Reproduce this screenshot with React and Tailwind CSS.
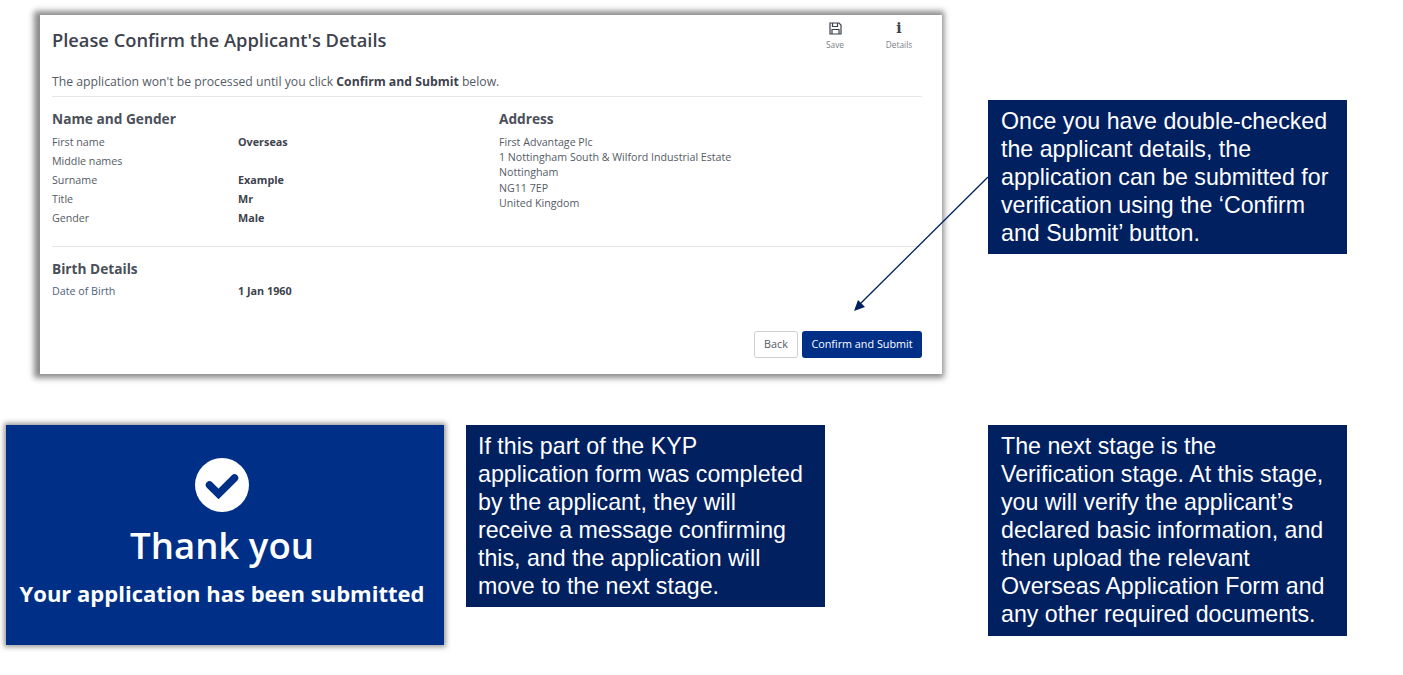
const F = "font-['Open_Sans',sans-serif]";

function Callout({ className, children }) {
  return (
    <div className={`w-[359px] bg-[#002060] text-[23.2px] leading-[28px] text-white font-['Liberation_Sans',Arial,sans-serif] ${className}`}>
      {children}
    </div>
  );
}

function Row({ label, value }) {
  return (
    <div className="flex h-[19px] items-center text-[10.7px] text-[#555b66]">
      <div className="w-[186px]">{label}</div>
      <div className="text-[10.8px] font-bold text-[#3d424d]">{value}</div>
    </div>
  );
}

export default function App() {
  return (
    <div className={`relative h-[675px] w-[1403px] overflow-hidden bg-white ${F}`}>
      <div className="flex items-start pl-[40px] pt-[15px]">
        <div className="flex h-[359px] w-[902px] flex-col bg-white pl-[12px] pr-[20px] shadow-[-2px_0_6px_4px_#8a8a8a]">
          <div className="flex h-[53px] items-start justify-between">
            <h1 className="pt-[13px] text-[18.3px] font-semibold leading-[24px] text-[#3d424d]">Please Confirm the Applicant's Details</h1>
            <div className="flex pt-[7px]">
              <div className="flex w-[64px] flex-col items-center text-[8.3px] leading-[12px] text-[#7a7f88]">
                <svg width="13" height="13" viewBox="0 0 13 13" fill="none" stroke="#3d424d" strokeWidth="1.2">
                  <path d="M1 1h9l2 2v9H1z" />
                  <path d="M3.5 1v3.5h5V1M3 12V7.5h7V12" />
                </svg>
                <span className="mt-[4px]">Save</span>
              </div>
              <div className="mr-[-9px] flex w-[64px] flex-col items-center text-[8.3px] leading-[12px] text-[#7a7f88]">
                <span className="h-[13px] font-['DejaVu_Serif',serif] text-[14px] font-bold leading-[13px] text-[#3d424d]">i</span>
                <span className="mt-[4px]">Details</span>
              </div>
            </div>
          </div>
          <p className="flex h-[29px] items-center border-b border-[#e6e6e6] pt-[1px] text-[12.22px] text-[#555b66]">
            <span>The application won't be processed until you click <b className="text-[#3d424d]">Confirm and Submit</b> below.</span>
          </p>
          <div className="flex h-[150px] border-b border-[#e6e6e6] pt-[13px]">
            <div className="w-[447px]">
              <h2 className="mb-[5px] text-[13.7px] font-bold leading-[18px] text-[#4a4f5a]">Name and Gender</h2>
              <Row label="First name" value="Overseas" />
              <Row label="Middle names" value="" />
              <Row label="Surname" value="Example" />
              <Row label="Title" value="Mr" />
              <Row label="Gender" value="Male" />
            </div>
            <div>
              <h2 className="mb-[7px] text-[13.7px] font-bold leading-[18px] text-[#4a4f5a]">Address</h2>
              <div className="text-[10.65px] leading-[15.2px] text-[#555b66]">
                <div>First Advantage Plc</div>
                <div>1 Nottingham South &amp; Wilford Industrial Estate</div>
                <div>Nottingham</div>
                <div>NG11 7EP</div>
                <div>United Kingdom</div>
              </div>
            </div>
          </div>
          <div className="pt-[13px]">
            <h2 className="mb-[4px] text-[13.7px] font-bold leading-[18px] text-[#4a4f5a]">Birth Details</h2>
            <div className="flex h-[19px] items-center text-[10.7px]">
              <div className="w-[186px] text-[#4f6280]">Date of Birth</div>
              <div className="text-[10.8px] font-bold text-[#3d424d]">1 Jan 1960</div>
            </div>
          </div>
          <div className="mt-[30px] flex justify-end gap-[4px]">
            <button className="flex h-[27px] w-[44px] items-center justify-center rounded-[3px] border border-[#cfcfcf] bg-white pb-[1px] text-[10.8px] text-[#555b66]">Back</button>
            <button className="flex h-[27px] w-[120px] items-center justify-center rounded-[3px] bg-[#002f87] pb-[1px] text-[10.8px] text-white">Confirm and Submit</button>
          </div>
        </div>
        <Callout className="ml-[46px] mt-[85px] h-[154px] pl-[13px] pt-[7px]">
          Once you have double-checked<br />the applicant details, the<br />application can be submitted for<br />verification using the ‘Confirm<br />and Submit’ button.
        </Callout>
      </div>

      <div className="mt-[51px] flex items-start pl-[6px]">
        <div className="flex h-[220px] w-[438px] flex-col items-center bg-[#002f87] pr-[6px] pt-[33px] text-white shadow-[0_0_5px_2px_#999999]">
          <svg width="54" height="54" viewBox="0 0 54 54">
            <circle cx="27" cy="27" r="27" fill="#ffffff" />
            <path d="M14.5 27l9 9 16-16" fill="none" stroke="#002f87" strokeWidth="7.5" strokeLinecap="round" strokeLinejoin="miter" />
          </svg>
          <div className="mt-[8px] text-[36.6px] font-semibold leading-[50px]">Thank you</div>
          <div className="mt-[8px] whitespace-nowrap text-[22px] font-bold leading-[30px]">Your application has been submitted</div>
        </div>
        <Callout className="ml-[22px] h-[182px] pl-[12px] pt-[7px]">
          If this part of the KYP<br />application form was completed<br />by the applicant, they will<br />receive a message confirming<br />this, and the application will<br />move to the next stage.
        </Callout>
        <Callout className="ml-[163px] h-[211px] pl-[13px] pt-[7px]">
          The next stage is the<br />Verification stage. At this stage,<br />you will verify the applicant’s<br />declared basic information, and<br />then upload the relevant<br />Overseas Application Form and<br />any other required documents.
        </Callout>
      </div>

      <svg className="absolute left-0 top-0" width="1403" height="675" fill="none">
        <path d="M988 177L860 304" stroke="#002060" strokeWidth="1.3" />
        <path d="M854 311l4-11 7 7z" fill="#002060" />
      </svg>
    </div>
  );
}
